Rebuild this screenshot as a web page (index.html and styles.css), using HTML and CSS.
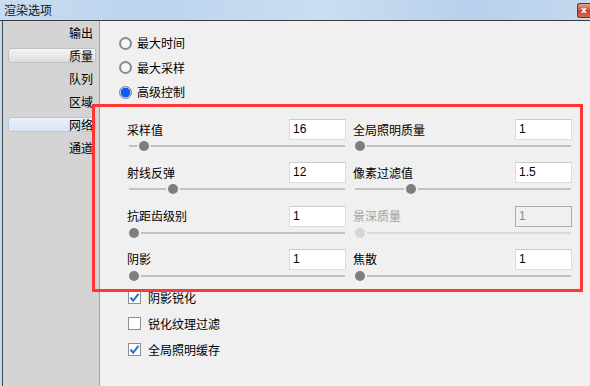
FILE: index.html
```html
<!DOCTYPE html>
<html lang="zh">
<head>
<meta charset="utf-8">
<title>渲染选项</title>
<link rel="stylesheet" href="styles.css">
</head>
<body>
<div class="window">
  <div class="titlebar">
    <span class="title">渲染选项</span>
    <span class="close">x</span>
  </div>
  <div class="frame">
    <nav class="sidebar">
      <div class="nav-item">输出</div>
      <div class="nav-item selected">质量</div>
      <div class="nav-item">队列</div>
      <div class="nav-item">区域</div>
      <div class="nav-item hover">网络</div>
      <div class="nav-item">通道</div>
    </nav>
    <main class="content">
      <div class="radios">
        <div class="radio"><span class="dot"></span><span>最大时间</span></div>
        <div class="radio"><span class="dot"></span><span>最大采样</span></div>
        <div class="radio"><span class="dot on"></span><span>高级控制</span></div>
      </div>
      <div class="grid">
        <div class="cell">
          <div class="cell-top"><span class="label">采样值</span><span class="num">16</span></div>
          <div class="slider"><span class="thumb" style="left:10px"></span></div>
        </div>
        <div class="cell">
          <div class="cell-top"><span class="label">全局照明质量</span><span class="num">1</span></div>
          <div class="slider"><span class="thumb" style="left:0px"></span></div>
        </div>
        <div class="cell">
          <div class="cell-top"><span class="label">射线反弹</span><span class="num">12</span></div>
          <div class="slider"><span class="thumb" style="left:39px"></span></div>
        </div>
        <div class="cell">
          <div class="cell-top"><span class="label">像素过滤值</span><span class="num">1.5</span></div>
          <div class="slider"><span class="thumb" style="left:51px"></span></div>
        </div>
        <div class="cell">
          <div class="cell-top"><span class="label">抗距齿级别</span><span class="num">1</span></div>
          <div class="slider"><span class="thumb" style="left:0px"></span></div>
        </div>
        <div class="cell disabled">
          <div class="cell-top"><span class="label">景深质量</span><span class="num">1</span></div>
          <div class="slider"><span class="thumb" style="left:0px"></span></div>
        </div>
        <div class="cell">
          <div class="cell-top"><span class="label">阴影</span><span class="num">1</span></div>
          <div class="slider"><span class="thumb" style="left:0px"></span></div>
        </div>
        <div class="cell">
          <div class="cell-top"><span class="label">焦散</span><span class="num">1</span></div>
          <div class="slider"><span class="thumb" style="left:0px"></span></div>
        </div>
      </div>
      <div class="checks">
        <div class="check"><span class="box"><svg viewBox="0 0 13 13" width="13" height="13"><path d="M2.5 6.5 L5.2 9.6 L10.5 2.8" fill="none" stroke="#2a6fd6" stroke-width="2"/></svg></span><span>阴影锐化</span></div>
        <div class="check"><span class="box"></span><span>锐化纹理过滤</span></div>
        <div class="check"><span class="box"><svg viewBox="0 0 13 13" width="13" height="13"><path d="M2.5 6.5 L5.2 9.6 L10.5 2.8" fill="none" stroke="#2a6fd6" stroke-width="2"/></svg></span><span>全局照明缓存</span></div>
      </div>
    </main>
  </div>
  <div class="annotation"></div>
</div>
</body>
</html>
```

FILE: styles.css
```css
html, body {
  margin: 0;
  padding: 0;
}
body {
  width: 590px;
  height: 386px;
  overflow: hidden;
  background: #c5d9ef;
  font-family: "Noto Sans CJK SC", "Liberation Sans", sans-serif;
  font-size: 12px;
  color: #000;
}
.window {
  position: relative;
  height: 386px;
}
.titlebar {
  height: 20px;
  display: flex;
  align-items: center;
  justify-content: space-between;
  background: linear-gradient(90deg, #c9dcf1 0%, #bcd4ee 25%, #cadef2 55%, #b8d0eb 80%, #c4d9ef 100%);
  border-bottom: 1px solid #3c3c3c;
}
.title {
  padding-left: 4px;
  line-height: 20px;
  color: #111;
}
.close {
  width: 13px;
  height: 15px;
  box-sizing: border-box;
  border: 1px solid #7b2b20;
  border-right: none;
  border-radius: 3px 0 0 3px;
  background: linear-gradient(#e9a08f, #c8452f 55%, #d9674d);
  color: #fff;
  font-family: "DejaVu Sans", sans-serif;
  font-size: 9px;
  line-height: 13px;
  text-align: center;
  font-weight: bold;
}
.frame {
  display: flex;
  height: 365px;
  margin-left: 2px;
  border-left: 1px solid #4a4a4a;
  background: #f0f0f0;
}
.sidebar {
  width: 96px;
  flex: none;
  background: #d4d4d4;
  border-right: 1px solid #a3a3a3;
  padding-top: 4px;
}
.nav-item {
  height: 15px;
  line-height: 14px;
  margin: 0 3px 8px 5px;
  padding-right: 2px;
  text-align: right;
  border: 1px solid transparent;
  border-radius: 3px;
  box-sizing: border-box;
}
.nav-item.selected {
  background: linear-gradient(#f4f4f4, #dedede);
  border-color: #c2c2c2;
}
.nav-item.hover {
  background: linear-gradient(#eaf1f9, #d9e5f2);
  border-color: #b3c9e1;
}
.content {
  flex: 1;
  padding: 14px 0 0 19px;
}
.radios {
  display: flex;
  flex-direction: column;
  gap: 8.5px;
}
.radio {
  display: flex;
  align-items: center;
  gap: 5px;
  height: 16px;
  line-height: 16px;
}
.dot {
  width: 13px;
  height: 13px;
  box-sizing: border-box;
  border-radius: 50%;
  border: 2px solid #8a8a8a;
  background: #f7f7f7;
  flex: none;
}
.dot.on {
  border: 1px solid #7a7a7a;
  background: radial-gradient(circle, #0b5cff 0, #0b5cff 4.5px, #cfd8e8 5.1px);
}
.grid {
  margin: 19px 0 0 8px;
  display: grid;
  grid-template-columns: 219px 219px;
  column-gap: 7px;
  row-gap: 10.3px;
}
.cell-top {
  display: flex;
  align-items: center;
  justify-content: space-between;
  height: 21px;
}
.label {
  line-height: 16px;
}
.num {
  width: 57px;
  height: 21px;
  box-sizing: border-box;
  background: #fff;
  border: 1px solid #dcdcdc;
  border-top-color: #cbcbcb;
  padding-left: 3px;
  font-family: "Liberation Sans", sans-serif;
  font-size: 12px;
  line-height: 19px;
}
.slider {
  position: relative;
  height: 12px;
  margin: 0 1px 0 2px;
}
.slider::before {
  content: "";
  position: absolute;
  left: 0;
  right: 0;
  top: 5px;
  height: 2px;
  background: #c2c2c2;
}
.thumb {
  position: absolute;
  top: 1px;
  width: 10px;
  height: 10px;
  border-radius: 50%;
  background: #7e7e7e;
  box-shadow: 0 0 0 2px #f0f0f0;
}
.disabled .label {
  color: #a2a2a2;
}
.disabled .num {
  background: #f0f0f0;
  border: 1px solid #ababab;
  color: #8a8a8a;
}
.disabled .slider::before {
  background: #dadada;
}
.disabled .thumb {
  background: #d6d6d6;
}
.checks {
  margin: 8px 0 0 9px;
  display: flex;
  flex-direction: column;
  gap: 10px;
}
.check {
  display: flex;
  align-items: center;
  gap: 7px;
  height: 16px;
  line-height: 16px;
}
.box {
  width: 13px;
  height: 13px;
  box-sizing: border-box;
  border: 1px solid #8e8e8e;
  background: #fff;
  position: relative;
  flex: none;
}
.box svg {
  position: absolute;
  left: -1px;
  top: -1px;
}
.annotation {
  position: absolute;
  left: 92px;
  top: 104px;
  width: 491px;
  height: 188px;
  box-sizing: border-box;
  border: 3px solid #ff3636;
}
```
